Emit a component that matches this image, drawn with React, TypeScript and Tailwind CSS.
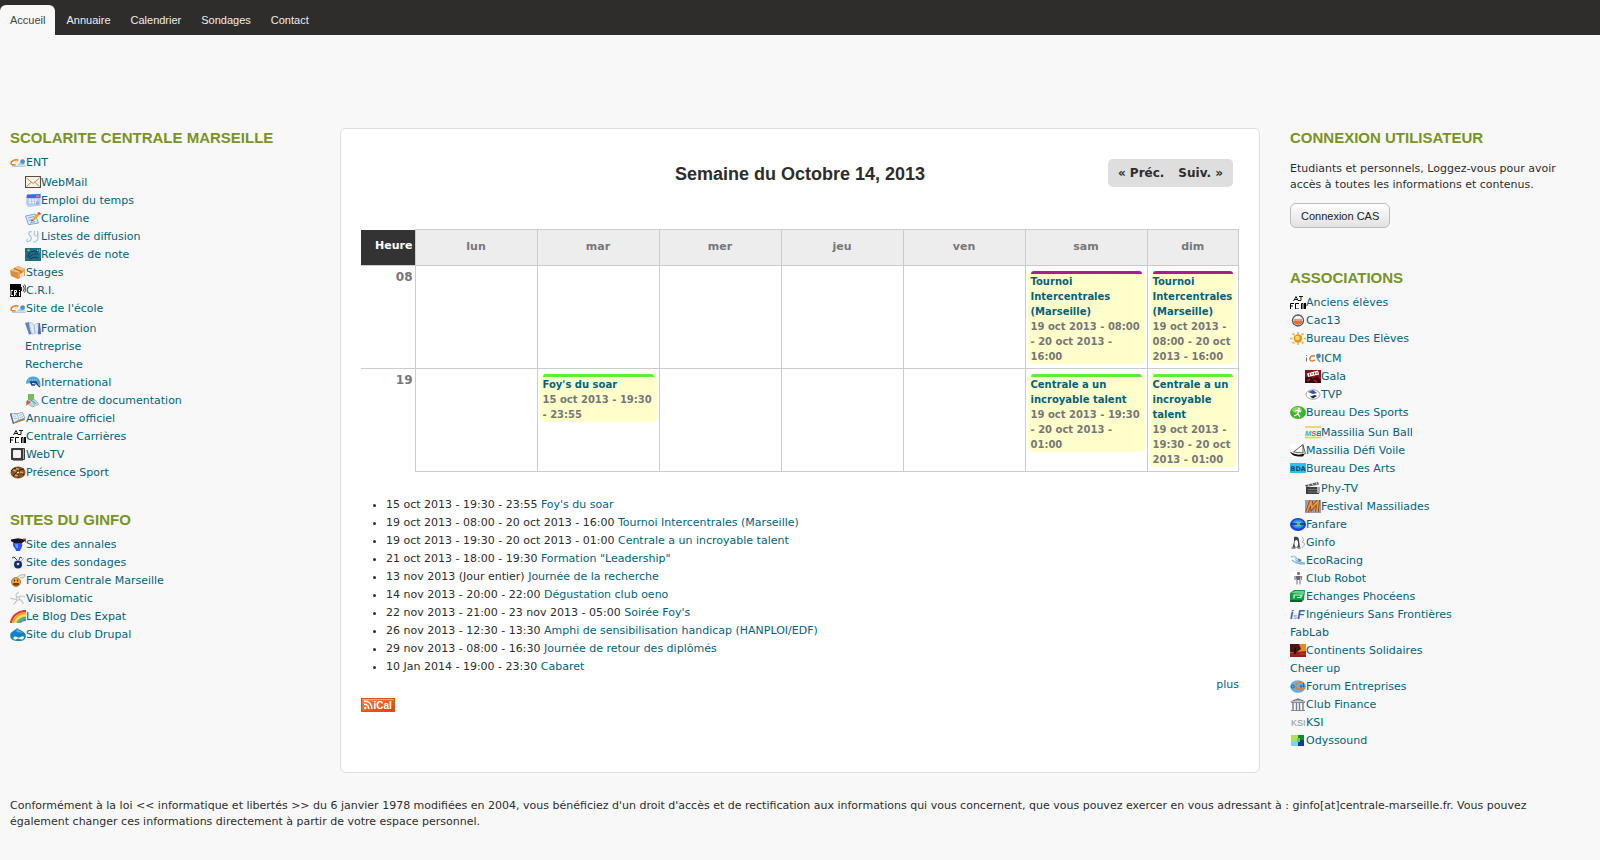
import type { ReactNode } from "react";

type Item = { label: string; icon?: string; children?: Item[] };

const icons: Record<string, ReactNode> = {
  ecole: (
    <>
      <path d="M2 10.2h13.500" stroke="#a9bdd0" strokeWidth="1.100" />
      <path d="M7 9.200c1.500-2.600 3.500-3.600 6-3.200l2.500 3.200z" fill="#a9d2ef" />
      <circle cx="12.600" cy="5.600" r="2.400" fill="#4a93c9" />
      <path d="M8.500 4.300C5 3 .8 5 1 7.300c.2 1.400 2.200 1.800 4.600 1.400" fill="none" stroke="#ee7d1c" strokeWidth="1.500" />
      <path d="M5 6.500l3-1" stroke="#f5c795" strokeWidth="1.200" />
    </>
  ),
  mail: (
    <>
      <rect x=".5" y=".5" width="15" height="11" fill="#fdf3de" stroke="#5d4a47" />
      <path d="M1.500 2l6.500 5.500L14.500 2M1.500 10.500l5-4.500M14.500 10.500L9.500 6" fill="none" stroke="#9b8570" strokeWidth=".9" />
    </>
  ),
  agenda: (
    <>
      <path d="M1.500 1.500L15.500 0v11.500L3 13 1 10z" fill="#b9c9f8" />
      <path d="M2 .5L15.500 0v4H1.500z" fill="#3f68e0" />
      <path d="M11 1h3.500v2.500H11z" fill="#e8686c" />
      <path d="M4 6h9M4 8.500h9" stroke="#f6f8ff" strokeWidth="1.600" strokeDasharray="2 1" />
      <path d="M11 7.500h3v3h-3z" fill="#97a9ee" />
    </>
  ),
  note: (
    <>
      <path d="M.5 4L10 2l3.500 9-10 1.700z" fill="#dfeafc" stroke="#6f9be6" strokeWidth=".9" />
      <path d="M3 6l6-1.500M3.500 8.500l6-1.500M5 11l5-1.500" stroke="#7ba4ee" />
      <path d="M6.500 8L13 .6l2.500 1.600L9 8.500z" fill="#f2a51e" />
      <path d="M12.500 1L14 0l2 1.600-1 1.200z" fill="#d8413b" />
      <path d="M6.500 8l-.6 1.500L9 8.500z" fill="#4b3b22" />
    </>
  ),
  liste: (
    <>
      <path
        d="M7 2C4 1 2.500 3 4.500 5s3 4 0 6-3-.5-2-2M9.500 1c-1 3 0 5 1.500 5s3-2 1.500-4M12.500 1l.5 7c0 3-3 4-5 4"
        fill="none"
        stroke="#a6c3ef"
        strokeWidth="1.200"
      />
    </>
  ),
  releve: (
    <>
      <rect width="16" height="13" fill="#1f6f86" />
      <path d="M3 9c0-5 5-7 10-5M4 10c3-5 6-4 9-4M5 11c3-2 6-2 8-1" fill="none" stroke="#123c58" strokeWidth="1.100" />
      <path d="M14 1l1 4M2 2h3" stroke="#57b5a4" />
      <path d="M3 2h1v1H3zM12 2h1v1h-1z" fill="#e6d75b" />
    </>
  ),
  carton: (
    <>
      <path d="M0 4.500L8 0l7 3v6.500L8 13 1 10z" fill="#d98f3c" />
      <path d="M0 4.500L8 0l7 3L8 6.500z" fill="#f0c07a" />
      <path d="M8 6.500V13l7-3.500V3z" fill="#e8a654" />
      <path d="M4 2.500l7 3v3" fill="none" stroke="#b06a24" strokeWidth="1.200" />
      <path d="M10 8l4-2v4l-4 2z" fill="#eadfd9" />
    </>
  ),
  cri: (
    <>
      <rect width="11" height="13" fill="#000" />
      <path d="M3 6.500H1v5h2M4.500 12V6.500h2v2h-2l2 3M9.500 6v1M9.500 8v4" fill="none" stroke="#fff" />
      <path d="M11.500 3v4M13 1.500c1.500 2 1.500 4 0 6M14.500.5c2 3 1.500 5 0 8" fill="none" stroke="#111" strokeWidth=".9" />
    </>
  ),
  livre: (
    <>
      <path d="M0 1l4-1 1 8 2 4-3 .5z" fill="#5f7fc8" />
      <path
        d="M4 1c3-1 4 1 5 2s2-2 4-2l1 10c-3-1-4 1-6 1s-2-1-2-3z"
        fill="#e3ebf8"
        stroke="#93a6cb"
        strokeWidth=".6"
      />
      <path d="M9 3l1 8" stroke="#a7b6d4" />
      <path d="M13.500 1H15l1 11-3 .5" fill="#466ac0" />
    </>
  ),
  monde: (
    <>
      <rect width="16" height="13" fill="#fff" />
      <path d="M1 8C1 3 4 .5 8.500.5S16 4 15.500 10c-2-3-4-2-5-1-1-2-3-2-4-1-2-1-4-1-5.500 0z" fill="#4aa5da" />
      <path d="M5 6h6l1 2 3 3M6 7l1 2h3" stroke="#153a7a" strokeWidth="1.300" fill="none" />
      <path d="M3 4h9" stroke="#a3daf4" strokeDasharray="1 1" />
    </>
  ),
  doc: (
    <>
      <path d="M3 0h6v6H3z" fill="#76be58" />
      <path d="M1 8l8-3 5 5-7 3z" fill="#b8d6d9" stroke="#7fa2a8" strokeWidth=".7" />
      <path d="M2 6l4 2-5 4z" fill="#d65a4b" />
      <path d="M6 6l5 4" stroke="#4f8bb1" />
      <path d="M10 11l4-1" stroke="#ccc" strokeWidth="2" />
    </>
  ),
  annuaire: (
    <>
      <path d="M0 2l3 10 12-4-2-7z" fill="#b2812d" />
      <path d="M1 1.500l6 .5 5-2 3 6-6 2-6 3z" fill="#e8f2ff" stroke="#7295ca" strokeWidth=".7" />
      <path d="M7 2l2 6M3 4l3 .3M4 6.500h3M9 3.500l3-1M10 5.500l3-1" stroke="#92b5e6" strokeWidth=".8" />
      <path d="M0 2l1-1 3 10-1 1z" fill="#55678d" />
    </>
  ),
  ecm: (
    <>
      <rect width="16" height="13" fill="#fff" />
      <path d="M3.500 5L6 .5l2 4M4.500 3.500h3M9 .5h4M11 .5v4M8 4.500h3" fill="none" stroke="#000" strokeWidth=".9" />
      <path d="M4 7.500H.5V13M.5 10H3M9 7.500H5.500V13H9M11.500 13V7.500H13V13" fill="none" stroke="#000" />
      <path d="M15 7v6" stroke="#000" strokeWidth="2" />
    </>
  ),
  tv: (
    <>
      <rect x="1" width="14" height="12" rx="1" fill="#39393b" />
      <rect x="3" y="2" width="8" height="8" rx="1" fill="#f2f2f2" />
      <path d="M13.500 1v10" stroke="#aaa" />
      <path d="M3 12.500h10" stroke="#888" />
    </>
  ),
  sport: (
    <>
      <ellipse cx="8" cy="6.500" rx="7.500" ry="6" fill="#8d5323" />
      <path d="M1 5l4-3 4 2 5-1M3 10l5-5 6 4M8 1v11" stroke="#2b1a10" fill="none" />
      <path d="M3 4l3 1M10 6l3 1M5 9l3 1M6 2.500l3 1" stroke="#e5a548" strokeWidth="1.600" />
      <path d="M7 7l2-1" stroke="#e3e3dd" strokeWidth="1.600" />
    </>
  ),
  annales: (
    <>
      <path d="M3 5h9c1 4-1 5-2 8H6c0-3-4-4-3-8z" fill="#2f55f5" />
      <path d="M5 6h3v4H6z" fill="#6d92ff" />
      <path d="M1 1.500L8 .3l7 1.200V3L12 5H4L1 3z" fill="#151521" />
      <path d="M13 .5h3v4h-1V2h-2z" fill="#e3343f" />
    </>
  ),
  sondages: (
    <>
      <rect width="16" height="13" fill="#eef0f3" />
      <circle cx="8" cy="8.500" r="4" fill="#152f63" />
      <circle cx="8" cy="8" r="1.300" fill="#d5e3fb" />
      <path d="M7 4L4 1 2 2M9 4l1-3 2 1" fill="none" stroke="#414b5e" />
      <path d="M11 5l3-3" stroke="#9eabbd" />
    </>
  ),
  forum: (
    <>
      <circle cx="6" cy="8" r="4.500" fill="#efa72e" stroke="#8f5b16" strokeWidth=".7" />
      <path d="M3 9h6v1.500c-2 1.500-4 1.500-6 0z" fill="#7a3518" />
      <path d="M4.500 5.500v2M7.500 5.500v2" stroke="#503012" strokeWidth="1.200" />
      <path d="M7 3l4-2 4-.5-1 3-4 .5" fill="#eee" stroke="#999" strokeWidth=".7" />
    </>
  ),
  visio: (
    <g fill="none" stroke="#c2c4c7" strokeWidth="1.200">
      <circle cx="8" cy="6.500" r="1.600" />
      <path d="M7 5C5 4 6 1 9 .6M9 5c2-2 4-1 6 0M9.500 7c2 1 3 3 4 5M7 8c-1 2-2 4-4 4M6 7C4 8 2 6 0 6" />
    </g>
  ),
  rainbow: (
    <g fill="none" strokeWidth="2.300">
      <path d="M1 13C2 6 8 1 16 1" stroke="#df3e31" />
      <path d="M3.200 13C4 8 9 3.200 16 3.200" stroke="#f49c2e" />
      <path d="M5.400 13C6 9.500 10 5.400 16 5.400" stroke="#f2df4b" />
      <path d="M7.600 13c.5-2.500 4-5.400 8.400-5.400" stroke="#55b95a" />
      <path d="M9.800 13c.5-1.500 3-3.200 6.200-3.200" stroke="#5886e0" />
    </g>
  ),
  drupal: (
    <>
      <path d="M7 0c1 2 9 3 8.800 8S11 13 8 13 0 12 .2 7.500 5 3 7 0z" fill="#1282c4" />
      <path d="M4.500 11.500c-2-.5-1-3 .5-3s3 1.500 4 1.200S12 7.500 13.500 8.500s-.5 3-2 3-2.500-1-3.500-1-2 1.500-3.500 1z" fill="#fff" />
      <path d="M7 1c1 2 5 2 6 4-3-1-6 0-7-2z" fill="#53b8e8" />
    </>
  ),
  cac: (
    <>
      <circle cx="8" cy="6.500" r="5.500" fill="#f9e4d7" stroke="#4b5670" strokeWidth="1.300" />
      <path d="M3.500 7h9c0 5-9 5-9 0z" fill="#ee6c28" />
      <path d="M4 6h8" stroke="#9a6656" />
      <path d="M6 3.500h4" stroke="#fff" strokeWidth="1.400" />
    </>
  ),
  soleil: (
    <>
      <path
        d="M8 0v2M8 11v2M0 6.500h2.500M13.500 6.500H16M2.500 1.500l2 1.500M13.500 1.500l-2 1.500M2.500 11.500l2-1.500M13.500 11.500l-2-1.500"
        stroke="#eab452"
        strokeWidth="1.700"
      />
      <circle cx="8" cy="6.500" r="4.200" fill="#dd961c" />
      <circle cx="7.500" cy="6" r="2.300" fill="#fbd861" />
    </>
  ),
  icm: (
    <>
      <rect width="16" height="13" fill="#fff" />
      <path d="M1.500 5.500v4M1.500 3v1" stroke="#4b7dad" />
      <path d="M10 4C6 3 4 6 5 8s3 1 5 0" fill="none" stroke="#ed7a26" strokeWidth="1.500" />
      <circle cx="13.500" cy="4" r="2.400" fill="#4487c0" />
      <path d="M12 6l3 4" stroke="#8d9aa7" strokeWidth="1.500" />
    </>
  ),
  gala: (
    <>
      <rect width="16" height="13" fill="#8e1419" />
      <path d="M0 8l4-3 4 4 4-3 4 5v2H0z" fill="#3c0b10" />
      <path d="M2 3.500l11-3 1 4L3 7z" fill="#fff" />
      <path d="M4.500 3.500v2M7 3v2M9.500 2.500v2M12 2v2" stroke="#c7222b" />
      <path d="M2 11l3-2M9 10l3 2" stroke="#d9333a" />
    </>
  ),
  tvp: (
    <>
      <rect width="16" height="13" fill="#fff" />
      <ellipse cx="8" cy="6.500" rx="7" ry="4.800" fill="#fff" stroke="#aaa49a" />
      <path d="M3 4l5-2 4 3-4 1z" fill="#2b5ba8" />
      <path d="M5 8.500l5-1.500 2 1-4 2.500z" fill="#1c2c50" />
      <path d="M12 3l3 3-2 3" fill="none" stroke="#c3c8d3" />
    </>
  ),
  bds: (
    <>
      <ellipse cx="8" cy="6.500" rx="8" ry="6.500" fill="#42b02d" />
      <ellipse cx="7" cy="4" rx="5" ry="3" fill="#83d867" />
      <circle cx="9" cy="2.500" r="1" fill="#fff" />
      <path d="M5 5l4-1 2 2M8.500 4L8 8l2 3M8 8l-4 2" stroke="#fff" strokeWidth="1.200" fill="none" />
    </>
  ),
  msb: (
    <>
      <rect width="16" height="13" fill="#eef8f2" />
      <path d="M0 1h16M0 11.500h16" stroke="#f6c94b" strokeWidth="1.600" />
      <text y="9.500" fontFamily="Liberation Sans" fontSize="7.500" fontWeight="700" fontStyle="italic">
        <tspan fill="#35b3b0">M</tspan>
        <tspan fill="#d24867">S</tspan>
        <tspan fill="#2c7f95">B</tspan>
      </text>
    </>
  ),
  voile: (
    <>
      <rect width="16" height="13" fill="#fff" />
      <path d="M0 7.500c3 2.500 7 3 10 3l5-1-2 3C6 13 2 12 0 7.500z" fill="#111" />
      <path d="M3.500 8L13 .5V9zM13 1l2.500 9" fill="none" stroke="#333" strokeWidth=".8" />
    </>
  ),
  bda: (
    <>
      <rect y="1" width="16" height="10" fill="#2fc0f3" />
      <text x=".5" y="8.500" fontFamily="DejaVu Sans" fontSize="6.500" fontWeight="700" fill="#134a66">
        BDA
      </text>
    </>
  ),
  clap: (
    <>
      <path d="M1 5h13v7H1z" fill="#3d3d3d" />
      <path d="M0 3l13-3 1 2.500L1 5z" fill="#666" />
      <path d="M3 2l1 2M7 1.200l1 2M11 .5l1 2" stroke="#ddd" />
      <path d="M3 7.500h9M3 10h9" stroke="#777" />
      <path d="M12 5h3v6h-3z" fill="#aaa" />
    </>
  ),
  festival: (
    <>
      <rect width="16" height="13" fill="#a69a9c" />
      <path d="M2 12L6 1l1 7 6-7-1 11" fill="none" stroke="#6e3a28" strokeWidth="3.400" />
      <path d="M2 12L6 1l1 7 6-7-1 11" fill="none" stroke="#ee9436" strokeWidth="2" />
    </>
  ),
  fanfare: (
    <>
      <ellipse cx="8" cy="6.500" rx="8" ry="6.500" fill="#1740dd" />
      <ellipse cx="8" cy="6" rx="6" ry="4.500" fill="#2b8cf5" />
      <ellipse cx="8" cy="6" rx="3.500" ry="2.500" fill="#52d2b0" />
      <path d="M1 6h14" stroke="#173065" strokeWidth="1.400" />
      <path d="M7 6h3" stroke="#e3e154" />
    </>
  ),
  ginfo: (
    <>
      <path d="M4 1c3-1 5 0 5 3l1 7.500H2.500L4 6z" fill="#444" />
      <ellipse cx="6.300" cy="7.500" rx="1.800" ry="3.500" fill="#fff" />
      <path d="M1.500 12h4M7.500 12h3" stroke="#777" strokeWidth="1.300" />
      <path d="M12 1l2 3-2 2 3 2-3 4" fill="none" stroke="#b5b5b5" />
    </>
  ),
  eco: (
    <>
      <rect width="16" height="13" fill="#fff" />
      <path d="M1 3c3-2 6 0 5 2s3 3 9 4M2 6c3 3 7 4 13 4" fill="none" stroke="#84b3d8" strokeWidth="1.200" />
      <path d="M7 4l5 2-3 2z" fill="#4a87bd" />
      <path d="M3 2l3 2" stroke="#b8d8ec" strokeWidth="2" />
    </>
  ),
  robot: (
    <>
      <rect width="16" height="13" fill="#fff" />
      <rect x="7" width="3" height="3" rx="1" fill="#7b7882" />
      <path d="M5.500 4h5.500l-1 4H6.500z" fill="#696771" />
      <path d="M7 8v4.500M10 8v4.500M5 4v4M11.500 4v4" stroke="#8e8b94" strokeWidth="1.300" />
    </>
  ),
  echanges: (
    <>
      <path d="M0 3l4-3h11l-1 10-3 2H0z" fill="#129a46" />
      <path d="M1 3l4-2h9v3z" fill="#64d287" />
      <path d="M4 8.500V5h7v2.500H7M11 5h2" fill="none" stroke="#d8f7de" strokeWidth="1.200" />
      <path d="M0 10h12v2H0z" fill="#0b602a" />
    </>
  ),
  isf: (
    <text y="10.500" fontFamily="Liberation Sans" fontSize="12" fontWeight="700" fontStyle="italic" fill="#3c61b2">
      i
      <tspan fontSize="7" fill="#8da5d8">
        s
      </tspan>
      F
    </text>
  ),
  continents: (
    <>
      <rect width="16" height="13" fill="#e98a22" />
      <path d="M0 0h9l2 5-5 4-6-1z" fill="#4a1513" />
      <path d="M0 9l16-2v6H0z" fill="#99201b" />
      <path d="M5 4v6" stroke="#280c0c" strokeWidth="2" />
      <path d="M10 10h6" stroke="#d1481e" />
    </>
  ),
  entreprises: (
    <>
      <ellipse cx="8" cy="6.500" rx="7.800" ry="6.300" fill="#5ab3e6" />
      <circle cx="2.800" cy="6.500" r="1.500" fill="none" stroke="#2d5d9c" />
      <path d="M11 5v4M13.500 3v6M10 6h5" stroke="#2d5d9c" strokeWidth=".9" />
      <path d="M13 3C8 1 4.500 5 6.500 8s5 1.500 8.500-.5" fill="none" stroke="#ed7e2f" strokeWidth="1.800" />
    </>
  ),
  finance: (
    <>
      <path d="M0 3.500L8 .3l8 3.200z" fill="#737986" />
      <path d="M1 4.500h14M1 12.500h14" stroke="#848995" />
      <path d="M3 5v7M6.500 5v7M9.500 5v7M13 5v7" stroke="#777d8a" strokeWidth="1.400" />
      <path d="M5 3h6" stroke="#dfe2e7" />
    </>
  ),
  ksi: (
    <text x="1" y="10" fontFamily="Liberation Sans" fontSize="9" fill="#8f9694">
      KSI
    </text>
  ),
  odys: (
    <>
      <path d="M1 1h7v6H1z" fill="#aee548" />
      <path d="M8 1h6v5H8z" fill="#0c8e2f" />
      <path d="M1 7h7v5H1z" fill="#72d9ee" />
      <path d="M8 6h6v6H8z" fill="#173d9c" />
      <path d="M7 4h3v4H7z" fill="#67c958" />
    </>
  ),
};

const scolarite: Item[] = [
  {
    label: "ENT",
    icon: "ecole",
    children: [
      { label: "WebMail", icon: "mail" },
      { label: "Emploi du temps", icon: "agenda" },
      { label: "Claroline", icon: "note" },
      { label: "Listes de diffusion", icon: "liste" },
      { label: "Relevés de note", icon: "releve" },
    ],
  },
  { label: "Stages", icon: "carton" },
  { label: "C.R.I.", icon: "cri" },
  {
    label: "Site de l'école",
    icon: "ecole",
    children: [
      { label: "Formation", icon: "livre" },
      { label: "Entreprise" },
      { label: "Recherche" },
      { label: "International", icon: "monde" },
      { label: "Centre de documentation", icon: "doc" },
    ],
  },
  { label: "Annuaire officiel", icon: "annuaire" },
  { label: "Centrale Carrières", icon: "ecm" },
  { label: "WebTV", icon: "tv" },
  { label: "Présence Sport", icon: "sport" },
];

const ginfo: Item[] = [
  { label: "Site des annales", icon: "annales" },
  { label: "Site des sondages", icon: "sondages" },
  { label: "Forum Centrale Marseille", icon: "forum" },
  { label: "Visiblomatic", icon: "visio" },
  { label: "Le Blog Des Expat", icon: "rainbow" },
  { label: "Site du club Drupal", icon: "drupal" },
];

const associations: Item[] = [
  { label: "Anciens élèves", icon: "ecm" },
  { label: "Cac13", icon: "cac" },
  {
    label: "Bureau Des Elèves",
    icon: "soleil",
    children: [
      { label: "ICM", icon: "icm" },
      { label: "Gala", icon: "gala" },
      { label: "TVP", icon: "tvp" },
    ],
  },
  { label: "Bureau Des Sports", icon: "bds", children: [{ label: "Massilia Sun Ball", icon: "msb" }] },
  { label: "Massilia Défi Voile", icon: "voile" },
  {
    label: "Bureau Des Arts",
    icon: "bda",
    children: [
      { label: "Phy-TV", icon: "clap" },
      { label: "Festival Massiliades", icon: "festival" },
    ],
  },
  { label: "Fanfare", icon: "fanfare" },
  { label: "Ginfo", icon: "ginfo" },
  { label: "EcoRacing", icon: "eco" },
  { label: "Club Robot", icon: "robot" },
  { label: "Echanges Phocéens", icon: "echanges" },
  { label: "Ingénieurs Sans Frontières", icon: "isf" },
  { label: "FabLab" },
  { label: "Continents Solidaires", icon: "continents" },
  { label: "Cheer up" },
  { label: "Forum Entreprises", icon: "entreprises" },
  { label: "Club Finance", icon: "finance" },
  { label: "KSI", icon: "ksi" },
  { label: "Odyssound", icon: "odys" },
];

const agenda: [string, string][] = [
  ["15 oct 2013 - 19:30 - 23:55", "Foy's du soar"],
  ["19 oct 2013 - 08:00 - 20 oct 2013 - 16:00", "Tournoi Intercentrales (Marseille)"],
  ["19 oct 2013 - 19:30 - 20 oct 2013 - 01:00", "Centrale a un incroyable talent"],
  ["21 oct 2013 - 18:00 - 19:30", 'Formation "Leadership"'],
  ["13 nov 2013 (Jour entier)", "Journée de la recherche"],
  ["14 nov 2013 - 20:00 - 22:00", "Dégustation club oeno"],
  ["22 nov 2013 - 21:00 - 23 nov 2013 - 05:00", "Soirée Foy's"],
  ["26 nov 2013 - 12:30 - 13:30", "Amphi de sensibilisation handicap (HANPLOI/EDF)"],
  ["29 nov 2013 - 08:00 - 16:30", "Journée de retour des diplômés"],
  ["10 Jan 2014 - 19:00 - 23:30", "Cabaret"],
];

const days = ["lun", "mar", "mer", "jeu", "ven", "sam", "dim"];

type Slot = { title: string; date: string; bar: string };
const tournoi: Slot = {
  title: "Tournoi Intercentrales (Marseille)",
  date: "19 oct 2013 - 08:00 - 20 oct 2013 - 16:00",
  bar: "bg-[#a61f8d]",
};
const foys: Slot = { title: "Foy's du soar", date: "15 oct 2013 - 19:30 - 23:55", bar: "bg-[#5fee36]" };
const talent: Slot = {
  title: "Centrale a un incroyable talent",
  date: "19 oct 2013 - 19:30 - 20 oct 2013 - 01:00",
  bar: "bg-[#5fee36]",
};

const rows: { hour: string; slots: Record<string, Slot> }[] = [
  { hour: "08", slots: { sam: tournoi, dim: tournoi } },
  { hour: "19", slots: { mar: foys, sam: talent, dim: talent } },
];

function Menu({ items, nested = false }: { items: Item[]; nested?: boolean }) {
  return (
    <ul className={nested ? "pt-[2px] pl-[15px]" : ""}>
      {items.map((item) => (
        <li key={item.label}>
          <a href="#" className="flex h-[18px] items-start leading-[18px] whitespace-nowrap text-[#02637f]">
            {item.icon && (
              <svg viewBox="0 0 16 13" className="mt-[2px] h-[13px] w-4 shrink-0" aria-hidden="true">
                {icons[item.icon]}
              </svg>
            )}
            {item.label}
          </a>
          {item.children && <Menu items={item.children} nested />}
        </li>
      ))}
    </ul>
  );
}

function Heading({ children }: { children: ReactNode }) {
  return (
    <h2 className="font-['Liberation_Sans',sans-serif] text-[15px] leading-5 font-bold whitespace-nowrap text-[#779424] uppercase">
      {children}
    </h2>
  );
}

function EventCard({ slot }: { slot: Slot }) {
  return (
    <div className="rounded-[5px] bg-[#ffffcc] px-[3px] text-[10px] leading-[15px] font-bold">
      <div className={`h-[3px] rounded-t-[3px] ${slot.bar}`} />
      <a href="#" className="block text-[#02637f]">
        {slot.title}
      </a>
      <div className="text-[#777777]">{slot.date}</div>
    </div>
  );
}

export default function App() {
  return (
    <div className="min-h-screen bg-[#f8f8f8] font-['DejaVu_Sans',sans-serif] text-[11px] leading-4 text-[#2d2d2d]">
      <nav className="flex h-[35px] items-end bg-[#2e2d2b] font-['Liberation_Sans',sans-serif]">
        {["Accueil", "Annuaire", "Calendrier", "Sondages", "Contact"].map((label, i) => (
          <a
            key={label}
            href="#"
            className={
              i === 0
                ? "mr-px h-[30px] rounded-t-[6px] bg-[#f8f8f8] px-[10px] leading-[30px] text-[#444444]"
                : "h-[30px] px-[10px] leading-[30px] text-[#eeeeee]"
            }
          >
            {label}
          </a>
        ))}
      </nav>

      <div className="grid grid-cols-[20%_60%_20%] pt-[93px]">
        <aside className="px-[10px]">
          <Heading>Scolarite Centrale Marseille</Heading>
          <div className="mt-[6px]">
            <Menu items={scolarite} />
          </div>
          <div className="mt-7">
            <Heading>Sites du Ginfo</Heading>
          </div>
          <div className="mt-[6px]">
            <Menu items={ginfo} />
          </div>
        </aside>

        <main className="px-5">
          <div className="rounded-[6px] border border-[#e0e0e0] bg-white px-5 pt-[30px] pb-[60px]">
            <div className="grid grid-cols-[1fr_auto_1fr] items-start">
              <h1 className="col-start-2 font-['Liberation_Sans',sans-serif] text-lg leading-[30px] font-bold">
                Semaine du Octobre 14, 2013
              </h1>
              <div className="mr-[6px] flex h-7 gap-[14px] justify-self-end rounded-[5px] bg-[#dedede] px-[10px] text-xs leading-7 font-bold whitespace-nowrap">
                <a href="#">« Préc.</a>
                <a href="#">Suiv. »</a>
              </div>
            </div>

            <table className="mt-10 w-full table-fixed border-collapse">
              <colgroup>
                <col className="w-[54px]" />
                <col className="w-[122px]" />
                <col className="w-[122px]" />
                <col className="w-[122px]" />
                <col className="w-[122px]" />
                <col className="w-[122px]" />
                <col className="w-[122px]" />
                <col />
              </colgroup>
              <thead>
                <tr className="h-9">
                  <th className="bg-[#333333] pr-[2px] pb-[2px] text-right text-white">Heure</th>
                  {days.map((day) => (
                    <th key={day} className="border border-[#cccccc] bg-[#ededed] pb-[2px] text-[#777777]">
                      {day}
                    </th>
                  ))}
                </tr>
              </thead>
              <tbody>
                {rows.map((row, i) => (
                  <tr key={row.hour} className="h-[103px] align-top">
                    <th
                      className={`pt-[3px] pr-[2px] text-right text-xs leading-4 text-[#777777] ${i === 0 ? "border-y border-[#cccccc]" : ""}`}
                    >
                      {row.hour}
                    </th>
                    {days.map((day) => (
                      <td key={day} className="border border-[#cccccc] px-[2px] pt-[5px] pb-1">
                        {row.slots[day] && <EventCard slot={row.slots[day]} />}
                      </td>
                    ))}
                  </tr>
                ))}
              </tbody>
            </table>

            <ul className="mt-6 list-disc pl-[25px] leading-[18px]">
              {agenda.map(([date, title]) => (
                <li key={title}>
                  {date}{" "}
                  <a href="#" className="text-[#02637f]">
                    {title}
                  </a>
                </li>
              ))}
            </ul>
            <div className="text-right leading-[18px]">
              <a href="#" className="text-[#02637f]">
                plus
              </a>
            </div>
            <a href="#" className="mt-1 block w-[34px]" aria-label="iCal">
              <svg viewBox="0 0 34 14" className="block h-[14px] w-[34px]">
                <defs>
                  <linearGradient id="ical" x1="0" y1="0" x2="1" y2="1">
                    <stop offset="0" stopColor="#ee8a45" />
                    <stop offset=".5" stopColor="#e9641f" />
                    <stop offset="1" stopColor="#e23c0a" />
                  </linearGradient>
                </defs>
                <rect x=".5" y=".5" width="33" height="13" fill="url(#ical)" stroke="#d9531a" />
                <path d="M1.500 1.500h31" stroke="#f5b080" />
                <circle cx="4.200" cy="10" r="1.200" fill="#fff" />
                <path
                  d="M3 6.200c3 0 4.700 2 4.700 4.800M3 3c5 0 7.900 3.200 7.900 8"
                  fill="none"
                  stroke="#fff"
                  strokeWidth="1.500"
                />
                <text x="12.500" y="11" fontFamily="Liberation Sans" fontSize="10" fontWeight="700" fill="#fff">
                  iCal
                </text>
              </svg>
            </a>
          </div>
        </main>

        <aside className="px-[10px]">
          <Heading>Connexion utilisateur</Heading>
          <p className="mt-[13px]">
            Etudiants et personnels, Loggez-vous pour avoir accès à toutes les informations et contenus.
          </p>
          <button
            type="button"
            className="mt-[10px] block h-[25px] rounded-[6px] border border-[#bbbbbb] bg-linear-to-b from-white to-[#e2e2e2] px-[10px] font-['Liberation_Sans',sans-serif] text-[11px] leading-4 text-[#222222]"
          >
            Connexion CAS
          </button>
          <div className="mt-10">
            <Heading>Associations</Heading>
          </div>
          <div className="mt-[6px]">
            <Menu items={associations} />
          </div>
        </aside>
      </div>

      <footer className="pt-[25px] pr-5 pb-8 pl-[10px]">
        <p>
          Conformément à la loi &lt;&lt; informatique et libertés &gt;&gt; du 6 janvier 1978 modifiées en 2004, vous bénéficiez
          d'un droit d'accès et de rectification aux informations qui vous concernent, que vous pouvez exercer en vous adressant
          à : ginfo[at]centrale-marseille.fr. Vous pouvez également changer ces informations directement à partir de votre espace
          personnel.
        </p>
      </footer>
    </div>
  );
}
